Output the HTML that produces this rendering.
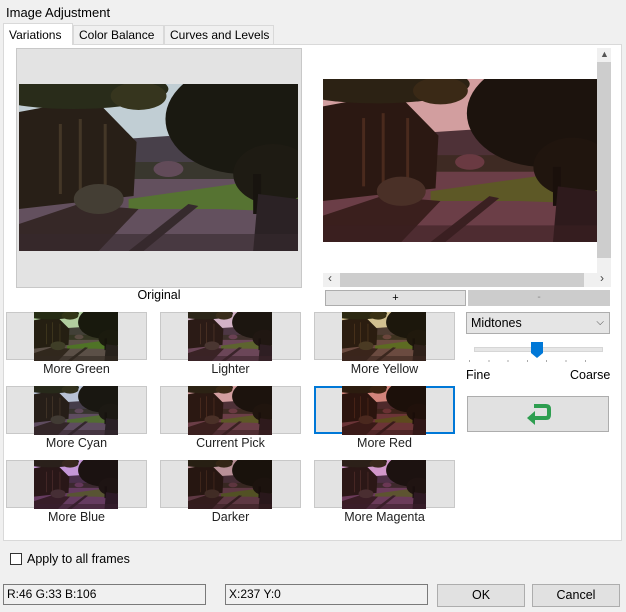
<!DOCTYPE html>
<html><head><style>
body{margin:0;width:626px;height:612px;background:#f0f0f0;font-family:"Liberation Sans",sans-serif;font-size:12px;color:#000;position:relative;overflow:hidden}
.a{position:absolute}
.title{left:6px;top:5px;font-size:13px}
.tab{position:absolute;top:25px;height:19px;border:1px solid #d9d9d9;border-bottom:none;background:#f0f0f0;font-size:12px;line-height:19px;padding:0 5px;box-sizing:border-box;white-space:nowrap}
.panel{left:3px;top:44px;width:619px;height:497px;background:#fff;border:1px solid #d9d9d9;box-sizing:border-box}
.ph{position:absolute;overflow:hidden}
.ph svg{position:absolute;left:0;top:0;width:100%;height:100%}
.ph::after{content:"";position:absolute;inset:0;background:var(--t,transparent);mix-blend-mode:multiply}
.box{position:absolute;width:141px;height:48px;background:#e3e3e3;border:1px solid #c8c8c8;box-sizing:border-box}
.lbl{position:absolute;width:141px;text-align:center;font-size:12.5px;color:#222}
.btn{position:absolute;background:#e1e1e1;border:1px solid #adadad;box-sizing:border-box;text-align:center}
.field{position:absolute;background:#f0f0f0;border:1px solid #7a7a7a;box-sizing:border-box;font-size:12px;line-height:18px;padding-left:3px}
</style></head><body>
<svg width="0" height="0" style="position:absolute">
<defs>
<symbol id="p" viewBox="0 0 280 167" preserveAspectRatio="none">
<rect width="280" height="167" fill="#2a221c"/>
<rect x="0" y="0" width="280" height="70" fill="#d2dbe6"/>
<polygon points="105,55 150,52 190,60 205,75 205,90 105,90" fill="#4e4450"/>
<rect x="105" y="78" width="175" height="20" fill="#3e3a32"/>
<rect x="0" y="95" width="280" height="72" fill="#6b5566"/>
<polygon points="110,115 230,98 280,100 280,128 200,125 110,125" fill="#5d7a36"/>
<polygon points="0,140 60,120 120,125 80,167 0,167" fill="#3a2a2a"/>
<polygon points="110,167 170,120 180,122 125,167" fill="#3a2c30"/>
<polygon points="0,28 75,14 118,58 115,112 0,125" fill="#2b2119"/>
<rect x="40" y="40" width="3" height="70" fill="#4a3a2a"/><rect x="60" y="35" width="3" height="75" fill="#4a3a2a"/><rect x="85" y="40" width="3" height="70" fill="#4a3a2a"/>
<ellipse cx="55" cy="5" rx="95" ry="20" fill="#2c2e1c"/>
<ellipse cx="120" cy="12" rx="28" ry="14" fill="#3a3820"/>
<ellipse cx="225" cy="35" rx="78" ry="55" fill="#1c1a12"/>
<ellipse cx="255" cy="90" rx="40" ry="30" fill="#201c14"/>
<rect x="235" y="90" width="8" height="40" fill="#1a1510"/>
<polygon points="235,167 240,110 280,115 280,167" fill="#2e2428"/>
<ellipse cx="80" cy="115" rx="25" ry="15" fill="#4a4238"/>
<ellipse cx="150" cy="85" rx="15" ry="8" fill="#6a5060"/>
<rect x="0" y="150" width="280" height="17" fill="#3a2c30" opacity=".6"/>
</symbol>
</defs></svg>
<div class="a title">Image Adjustment</div>
<div class="a panel"></div>
<div class="tab" style="left:3px;top:23px;height:22px;width:70px;background:#fff;line-height:22px;z-index:2">Variations</div>
<div class="tab" style="left:73px;width:91px">Color Balance</div>
<div class="tab" style="left:164px;width:110px">Curves and Levels</div>

<div class="a" style="left:16px;top:48px;width:286px;height:240px;background:#e3e3e3;border:1px solid #c8c8c8;box-sizing:border-box"></div>
<div class="ph" style="left:19px;top:84px;width:279px;height:167px;--t:rgba(235,240,235,1)"><svg><use href="#p"/></svg></div>
<div class="a" style="left:16px;top:288px;width:286px;text-align:center;font-size:12.5px">Original</div>

<div class="ph" style="left:323px;top:79px;width:274px;height:163px;--t:#ffb8b0"><svg><use href="#p"/></svg></div>
<div class="a" style="left:597px;top:48px;width:14px;height:225px;background:#f0f0f0"></div>
<div class="a" style="left:600px;top:49px;font-size:9px;color:#555">▲</div>
<div class="a" style="left:597px;top:62px;width:14px;height:196px;background:#cdcdcd"></div>
<div class="a" style="left:323px;top:273px;width:288px;height:14px;background:#f0f0f0"></div>
<div class="a" style="left:340px;top:273px;width:244px;height:14px;background:#cdcdcd"></div>
<div class="a" style="left:328px;top:271px;font-size:12px;color:#444">‹</div>
<div class="a" style="left:600px;top:271px;font-size:12px;color:#444">›</div>
<div class="btn" style="left:325px;top:290px;width:141px;height:16px;font-size:11px;line-height:15px">+</div>
<div class="a" style="left:468px;top:290px;width:142px;height:16px;background:#cccccc;text-align:center;color:#888;font-size:10px;line-height:15px">-</div>

<div class="box" style="left:6px;top:312px"></div><div class="ph" style="left:34px;top:312px;width:84px;height:49px;--t:#d8f0b0"><svg><use href="#p"/></svg></div><div class="lbl" style="left:6px;top:362px">More Green</div>
<div class="box" style="left:160px;top:312px"></div><div class="ph" style="left:188px;top:312px;width:84px;height:49px;--t:#ffd0dc"><svg><use href="#p"/></svg></div><div class="lbl" style="left:160px;top:362px">Lighter</div>
<div class="box" style="left:314px;top:312px"></div><div class="ph" style="left:342px;top:312px;width:84px;height:49px;--t:#ffe0a0"><svg><use href="#p"/></svg></div><div class="lbl" style="left:314px;top:362px">More Yellow</div>

<div class="box" style="left:6px;top:386px"></div><div class="ph" style="left:34px;top:386px;width:84px;height:49px;--t:#e0e2ec"><svg><use href="#p"/></svg></div><div class="lbl" style="left:6px;top:436px">More Cyan</div>
<div class="box" style="left:160px;top:386px"></div><div class="ph" style="left:188px;top:386px;width:84px;height:49px;--t:#ffb8b0"><svg><use href="#p"/></svg></div><div class="lbl" style="left:160px;top:436px">Current Pick</div>
<div class="box" style="left:314px;top:386px;border:2px solid #0078d7"></div><div class="ph" style="left:342px;top:386px;width:84px;height:49px;--t:#ff9a88"><svg><use href="#p"/></svg></div><div class="lbl" style="left:314px;top:436px">More Red</div>

<div class="box" style="left:6px;top:460px"></div><div class="ph" style="left:34px;top:460px;width:84px;height:49px;--t:#f0b0f0"><svg><use href="#p"/></svg></div><div class="lbl" style="left:6px;top:510px">More Blue</div>
<div class="box" style="left:160px;top:460px"></div><div class="ph" style="left:188px;top:460px;width:84px;height:49px;--t:#e0a8a8"><svg><use href="#p"/></svg></div><div class="lbl" style="left:160px;top:510px">Darker</div>
<div class="box" style="left:314px;top:460px"></div><div class="ph" style="left:342px;top:460px;width:84px;height:49px;--t:#ffb0e0"><svg><use href="#p"/></svg></div><div class="lbl" style="left:314px;top:510px">More Magenta</div>

<div class="a" style="left:466px;top:312px;width:144px;height:22px;background:#e5e5e5;border:1px solid #adadad;box-sizing:border-box;font-size:12.5px;line-height:20px;padding-left:4px">Midtones<span style="position:absolute;right:5px;top:0;font-size:10px;color:#444">⌵</span></div>
<div class="a" style="left:474px;top:347px;width:127px;height:3px;background:#e6e6e6;border:1px solid #d6d6d6"></div>
<svg class="a" style="left:530px;top:341px" width="14" height="18"><path d="M1 1H13V12L7 17L1 12Z" fill="#0078d7"/></svg>
<div class="a" style="left:469px;top:360px;width:130px;height:2px;background:repeating-linear-gradient(90deg,#aaa 0 1px,transparent 1px 19.3px)"></div>
<div class="a" style="left:466px;top:368px;font-size:12.5px">Fine</div>
<div class="a" style="left:570px;top:368px;font-size:12.5px">Coarse</div>
<div class="btn" style="left:467px;top:396px;width:142px;height:36px"></div>
<svg class="a" style="left:524px;top:402px" width="28" height="24"><path d="M10 4H22Q25 4 25 7V13Q25 16 22 16H10" fill="none" stroke="#2e9e50" stroke-width="4"/><path d="M3 16L11 9V23Z" fill="#2e9e50"/></svg>

<div class="a" style="left:10px;top:553px;width:12px;height:12px;border:1px solid #333;background:#fff;box-sizing:border-box"></div>
<div class="a" style="left:27px;top:552px;font-size:12.5px">Apply to all frames</div>
<div class="field" style="left:3px;top:584px;width:203px;height:21px">R:46 G:33 B:106</div>
<div class="field" style="left:225px;top:584px;width:203px;height:21px">X:237 Y:0</div>
<div class="btn" style="left:437px;top:584px;width:88px;height:23px;line-height:21px;font-size:12.5px">OK</div>
<div class="btn" style="left:532px;top:584px;width:88px;height:23px;line-height:21px;font-size:12.5px">Cancel</div>
</body></html>
